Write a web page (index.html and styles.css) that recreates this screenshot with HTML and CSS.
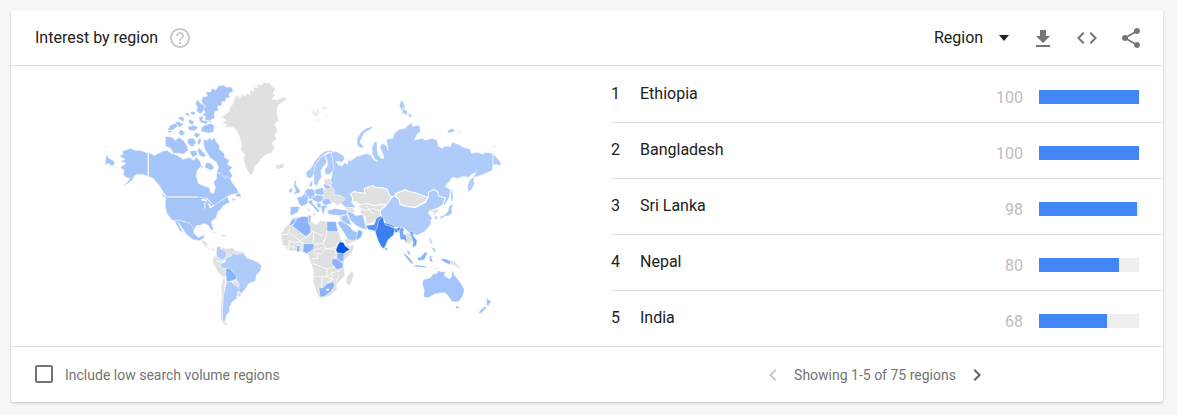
FILE: index.html
```html
<!DOCTYPE html>
<html lang="en">
<head>
<meta charset="utf-8">
<title>Interest by region</title>
<link rel="stylesheet" href="styles.css">
</head>
<body>
<main class="card">
  <header class="card-header">
    <h1 class="title">Interest by region</h1>
    <button class="icon-button help" type="button" aria-label="Help">
      <svg viewBox="0 0 24 24" width="24" height="24"><path fill="#cacaca" d="M11 18h2v-2h-2v2zm1-16C6.480 2 2 6.480 2 12s4.480 10 10 10 10-4.480 10-10S17.520 2 12 2zm0 18c-4.410 0-8-3.590-8-8s3.590-8 8-8 8 3.590 8 8-3.590 8-8 8zm0-14c-2.210 0-4 1.790-4 4h2c0-1.100.9-2 2-2s2 .9 2 2c0 2-3 1.750-3 5h2c0-2.250 3-2.500 3-5 0-2.210-1.790-4-4-4z"/></svg>
    </button>
    <div class="actions">
      <div class="resolution">
        <select class="resolution-select" aria-label="Resolution"><option>Region</option></select>
        <svg class="caret" viewBox="0 0 10 6" width="10" height="6"><path fill="#212121" d="M0 0h10L5 6z"/></svg>
      </div>
      <button class="icon-button" type="button" aria-label="Download"><svg viewBox="0 0 24 24" width="24" height="24"><path fill="#757575" d="M19 10h-4V4H9v6H5l7 7 7-7zM5 19v2h14v-2H5z"/></svg></button>
      <button class="icon-button" type="button" aria-label="Embed"><svg viewBox="0 0 24 24" width="24" height="24"><path fill="#757575" d="M9.400 16.600L4.800 12l4.600-4.600L8 6l-6 6 6 6 1.400-1.400zm5.200 0l4.600-4.600-4.600-4.600L16 6l6 6-6 6-1.400-1.400z"/></svg></button>
      <button class="icon-button" type="button" aria-label="Share"><svg viewBox="0 0 24 24" width="24" height="24"><path fill="#757575" d="M18 16.080c-.76 0-1.440.3-1.960.77L8.910 12.700c.05-.23.09-.46.09-.7s-.04-.47-.09-.7l7.050-4.110c.54.5 1.250.81 2.040.81 1.660 0 3-1.340 3-3s-1.340-3-3-3-3 1.340-3 3c0 .24.04.47.09.7L8.040 9.810C7.500 9.310 6.790 9 6 9c-1.660 0-3 1.340-3 3s1.340 3 3 3c.79 0 1.500-.31 2.040-.81l7.120 4.160c-.05.21-.08.43-.08.65 0 1.610 1.310 2.920 2.920 2.920s2.920-1.310 2.920-2.920-1.310-2.920-2.920-2.920z"/></svg></button>
    </div>
  </header>
  <div class="card-body">
    <div class="map-pane">
      <svg class="map" viewBox="100 77 410 260" role="img" aria-label="World map of interest by region">
        <!-- Russia lies under its neighbours -->
        <path class="land lighter" d="M331 153L336 152L343 156L345 159L342 163L336 162L338 165L342 167L345 163L347 165L348 162L351 158L350 162L357 157L367 154L371 156L374 161L378 162L375 160L372 155L372 148L374 143L377 142L377 149L378 155L381 159L384 159L382 153L380 148L382 144L386 146L388 151L387 145L386 140L393 139L394 134L399 130L405 129L408 126L412 123L412 127L417 126L420 127L420 133L417 135L414 141L422 139L425 141L432 139L437 141L438 147L442 149L444 147L450 147L452 143L458 145L463 148L470 150L471 154L477 153L483 155L484 153L492 154L496 158L500 163L500 167L496 165L493 166L492 171L488 173L483 175L477 177L473 178L474 184L472 189L468 193L467 187L469 181L473 177L476 173L471 175L468 178L463 177L457 179L452 178L449 182L445 187L450 190L449 198L445 205L441 207L436 210L350 208L347 209L341 204L339 200L334 197L330 191L330 183L332 176L333 167z"/>
        <g class="land">
          <!-- Greenland, Iceland, Svalbard -->
          <path d="M222 118L226 115L230 112L230 109L234 104L235 99L238 96L240 99L243 95L245 97L248 94L251 96L250 91L254 92L254 88L258 89L257 85L262 86L263 83L270 84L273 88L276 90L273 94L276 96L272 100L278 101L283 98L287 99L285 102L281 104L278 107L277 114L279 121L275 125L278 131L275 136L277 140L272 144L275 148L272 154L267 155L261 160L259 164L255 167L254 173L251 176L248 172L246 167L244 161L245 155L241 151L242 145L240 138L237 131L233 128L225 128L227 125L222 124L227 121z"/>
          <path d="M275 164L278 166L283 164L285 167L282 169L277 170L276 167z"/>
          <path opacity=".6" d="M311 112L314 110L315 113L318 109L320 113L317 118L314 117zM321 108L327 107L328 110L323 111zM316 121L320 119L318 123zM325 115L329 114L327 117z"/>
          <!-- Central America and Caribbean -->
          <path d="M200 240L205 241L208 244L208 247L211 249L217 249L214 251L209 249L205 246L203 243zM209 232L214 232L220 235L215 234zM221 235L226 235L227 237L222 237z"/>
          <!-- South America -->
          <path d="M221 247L227 249L233 248L236 251L244 252L242 257L234 259L229 261L224 260zM214 256L219 257L223 261L222 266L226 269L227 274L225 279L219 273L213 262zM224 277L226 280L225 290L224 301L224 319L227 323L229 326L225 325L221 320L221 309L222 298L222 286zM233 280L238 281L241 285L239 290L235 287zM238 291L242 294L241 297L237 296z"/>
          <!-- Eastern Europe -->
          <path d="M324 180L330 179L332 184L330 187L325 186zM325 187L331 186L335 191L334 195L341 196L345 199L341 204L337 206L334 203L330 205L328 200L323 199L324 192zM345 208L352 208L356 212L350 214zM339 215L347 213L346 220L340 223z"/>
          <!-- Central Asia -->
          <path class="tight" d="M350 195L354 192L360 193L365 194L364 189L373 186L375 188L382 188L387 190L389 195L392 198L390 201L387 206L381 205L374 207L367 206L361 207L359 204L357 207L352 203L353 198z"/>
          <path class="tight" d="M357 206L366 204L374 206L385 205L386 209L382 213L378 219L371 224L366 225L365 217L360 214z"/>
          <path class="tight" d="M395 194L401 192L405 190L409 192L414 193L420 195L425 197L428 198L425 202L420 205L415 208L406 207L399 204z"/>
          <path d="M431 211L437 208L438 212L434 215zM344 239L351 240L358 237L357 241L346 245zM404 235L409 233L413 240L409 245L405 241zM450 260L455 262L459 267L461 270L456 267L450 264z"/>
          <!-- Africa -->
          <path d="M290 224L296 217L308 217L311 222L317 225L320 221L327 222L336 223L339 232L341 240L344 244L350 246L355 245L352 253L344 261L344 267L345 276L337 284L337 290L330 296L320 299L317 293L313 281L314 272L311 263L308 253L302 252L289 251L283 245L281 235L285 228z"/>
          <path d="M352 271L354 275L351 284L348 286L346 283L347 277z"/>
        </g>
        <path class="borders" d="M281 235h7l2-6M290 233l10 8 9-5 4-4 9 4M289 241l6 2 5-1 5 2M290 241l-1 5 5 1v5M283 246l6 1 0 5M302 244v8M314 234l-1 10M327 232l-1 5-3 7M313 245l10-1 3 5 9-1 3-5M314 251l8-3M326 237l-3 7M315 254l7 0 3-5 10 1 2 5-4 6 1 7-8 1-9-4-4-1M312 259l6 0 0-4M327 269l0 8-14 0M322 277l0 11M327 277l5-4 0 7-5 3M332 273l8-2M327 277l7 3M336 282l3-7M357 207l8 4 8-2 9 3M367 206l3 6 5 3M216 261l5 1"/>
        <g class="land low">
          <!-- United States -->
          <path d="M166 196L200 196L207 199L211 203L220 202L228 197L230 203L224 206L222 209L218 213L217 218L212 222L214 230L212 231L209 226L205 224L200 226L197 226L195 231L190 226L185 222L173 221L168 215L166 208z"/>
          <!-- Alaska and the Chukchi tip -->
          <path d="M120 157L124 155L123 152L131 149L136 151L141 151L149 154L149 177L143 175L138 175L135 177L133 181L129 184L123 187L129 182L131 179L127 178L124 175L125 171L121 168L127 164L121 162L126 160z"/>
          <path d="M107 155L110 159L114 161L116 164L113 167L109 164L106 166zM106 147h2l-1 2zM116 168h2l-1 2zM132 236h1v1z"/>
          <!-- Canada mainland -->
          <path d="M149 153L155 156L163 152L168 151L172 154L178 156L184 160L190 158L194 161L197 158L201 162L202 167L198 171L197 176L199 184L206 187L210 188L211 193L214 194L216 188L214 183L217 179L217 173L222 174L225 177L229 174L232 182L238 190L239 194L232 195L228 197L223 200L215 206L211 203L208 199L200 197.500L168 197.500L164 193L160 186L154 179L149 177z"/>
          <path d="M235 196L240 193L242 198L238 197zM232 199h4l-2 3zM162 193l3 2 2 5-3-3z"/>
          <!-- Arctic islands -->
          <path d="M203 98L208 97L206 93L211 93L213 89L216 91L219 87L224 86L227 88L232 88L234 92L229 95L231 98L227 99L225 103L223 102L222 107L218 107L219 111L215 113L215 119L211 121L213 124L208 121L205 122L206 117L202 116L206 113L202 109L206 107L202 103z"/>
          <path d="M198 100l3 4 4 2-1 6-3 3-4-3 1-4-2-3zM192 112l4 1-1 3-4-1zM199 118l5-1-1 4 6 1-2 3-6-2zM190 120l5 2-2 4-4-3zM181 117l4 2-1 4-5-4zM186 113l3 1 2 3-5-1zM178 122l7 3-5 3-4-4zM171 126l5-2 3 3-6 4-5 0zM188 128l6-2 5 2-4 4-5-1zM203 127l8-3 4 2-1 7-5 1-8-2zM181 130l5 3-3 4-4-3zM197 133l4 2-3 4-4-3zM169 131l5 1-5 2z"/>
          <path d="M166 137L173 138L176 141L180 138L184 141L188 147L189 151L184 155L179 154L174 154L171 149L166 147zM189 139h5l3 4-4 5-5-4zM199 139l3 1-1 5h-3zM190 152l7-1 1 5-5 2zM200 148l3 4 4 4-3 2-4-2-2-4z"/>
          <path d="M204 140L208 141L210 138L212 141L215 138L217 143L220 146L220 150L225 154L225 158L230 161L228 165L233 168L230 171L233 176L231 180L227 176L226 179L221 174L217 173L219 168L217 163L211 159L209 156L206 151L204 145z"/>
          <path d="M207 163l5 1 3 5-4 2-6-3zM202 166l2 2-2 1z"/>
          <!-- Mexico -->
          <path d="M175 221L181 221L187 223L190 223L194 228L195 234L199 238L203 236L206 235L204 239L200 241L194 240L188 236L183 229L179 223L182 230L184 234L180 231z"/>
        </g>
        <g class="land lighter">
          <!-- Brazil, Colombia, Argentina -->
          <path d="M226 259L232 256L233 253L237 255L244 253L247 258L253 260L259 263L262 266L261 271L257 275L256 281L249 284L246 289L242 294L237 290L240 285L236 279L233 273L228 269L222 268L221 264L226 262z"/>
          <path d="M217 248L220 246L221 249L226 251L227 256L224 261L217 257z"/>
          <path d="M227 282L231 281L235 285L240 288L238 293L237 299L233 302L230 307L230 312L227 315L226 321L223 321L223 311L224 295zM225 323l4 3-3-1z"/>
          <!-- Russian islands -->
          <path d="M373 127L371 130L365 133L362 138L360 143L364 148L360 149L357 145L357 139L361 133L366 129zM401 101L404 104L405 110L401 111L399 106zM402 108L407 112L407 116L402 114zM408 113L412 117L409 119zM447 131L452 129L455 132L448 134zM457 132l4 2-3 0zM492 147l3 0-1 2zM452 189L453 201L451 202L450 193z"/>
          <!-- China -->
          <path class="tight" d="M380 211L386 206L390 200L394 196L399 200L400 205L406 207L415 208L425 203L428 198L428 193L433 190L437 192L439 197L445 198L443 205L437 209L431 211L428 213L432 218L430 226L425 232L417 236L408 233L403 228L394 228L385 223L381 216z"/>
          <!-- Scandinavia -->
          <path d="M306 173L311 169L315 162L320 156L325 152L332 151L333 153L328 153L321 158L317 165L315 174L311 179L307 178z"/>
          <path d="M314 175L315 166L321 158L325 156L327 163L323 168L321 172L322 177L319 182L317 187L314 184z"/>
          <path d="M325 156L331 153L333 162L334 170L330 175L325 175L325 170L328 166L327 160z"/>
        </g>
        <g class="land mid">
          <!-- Western and southern Europe -->
          <path d="M295 181L297 181L296 185L299 189L301 193L294 195L296 191L294 186zM290 189h3l-1 4h-3zM297 198L302 197L305 193L309 197L308 204L302 207L299 204zM291 207L300 207L298 213L292 216L290 214zM305 192L308 189L315 190L315 197L311 200L306 197zM315 190L323 188L325 195L319 196L315 194zM311 182h2l-1 5h-3zM307 202L313 200L313 204L320 211L318 213L311 205zM312 197L319 195L324 197L324 201L318 203L312 200zM323 199L329 199L332 204L325 206L322 203zM316 203L321 204L322 209L318 208zM321 206L328 206L325 210L324 216L321 209zM324 184L331 187L328 190L324 188zM308 208l2 2-1 3zM312 214h4l-1 2z"/>
          <path d="M327 211L335 209L342 210L348 211L347 215L339 216L329 215z"/>
          <!-- Middle East -->
          <path d="M347 212L352 213L356 216L363 215L365 224L367 230L362 229L356 226L350 220zM341 217L347 215L352 226L346 224L342 222zM337 223L342 221L349 226L352 230L355 232L361 233L361 237L354 241L348 240L342 230z"/>
          <path d="M449 206l4-1-2 5 1 3-3 3-5 1-4 3 0-3 5-2 3-4zM434 216l3 1v3h-2z"/>
          <!-- Australia and New Zealand -->
          <path class="australia" d="M422 284L423 280L430 278L433 274L436 274L438 271L441 272L445 272L444 276L449 279L451 277L452 270L454 275L457 279L461 284L464 290L462 297L458 302L452 302L449 298L447 295L444 293L435 294L428 298L423 297L424 291zM455 306h4l-1 3h-2zM486 297l2 3 3 1-3 5-2-1zM485 306l1 2-5 5-3 1 1-3z"/>
          <path d="M430 237l1 4 2 3-3-1-1-3zM431 247l4 2v4l-2-2z"/>
        </g>
        <g class="land strong">
          <path d="M289 227L292 220L296 218L296 223zM295 220L302 217L309 217L309 223L311 228L311 233L306 237L293 227zM308 216h3v6l-2 2zM327 222L336 222L338 232L327 232zM304 244h10l0 5-4 3-3 2-4-2zM297 246h3v6h-3zM337 253h7v7l-3 3-4-4zM332 259L338 259L343 263L343 268L337 270L332 264zM319 288L323 288L327 284L333 282L335 285L332 291L324 297L320 297zM226 269L230 268L233 272L237 276L237 279L233 281L227 282zM358 230l5 2-2 6-5 3z"/>
          <path d="M402 252l3 2 6 6 3 5-4-2-6-8zM414 265l8 1 5 1-1 1-11-1zM417 257L420 258L425 252L427 254L424 260L418 261zM429 257l4-1-2 2 2 4h-3zM440 259h4l6 2v4l-5-2-3-2zM407 250l3 3v3l-3-3zM434 268h4l-3 1z"/>
        </g>
        <g class="land top">
          <path opacity=".8" d="M409 232h4v4l4 5-1 5-4 2 1-5-2-6zM399 230l3-3 2 3-1 4 3 2 1 8-3-4-4 0z"/>
          <path d="M366 226L374 225L376 219L381 216L383 220L378 228L377 232L368 230z"/>
          <path class="india" d="M379 220L383 217L384 223L391 227L396 229L401 227L398 233L395 231L393 236L388 240L386 245L384 249L381 247L378 241L375 232L377 228z"/>
          <path d="M385 223l9 3v2l-9-3zM394 229h3l1 4h-3zM385 247l2 2v2l-2-1z"/>
        </g>
        <path class="land ethiopia" d="M338 245L340 242L344 243L345 246L350 250L346 252L344 254L337 253L336 250z"/>
        <path class="borders" d="M492.500 154v18M149 153v24M168 197.500h30"/>
        <path class="lake" d="M353 202L357 202L358 205L361 210L360 214L356 213L355 208zM326 289h3v2h-2zM202 199l5 1 1 2-6-1zM205 203l1 0 0 6-1 0zM208 203l3 2-1 3zM210 207l6-2-5 4z"/>
      </svg>
    </div>
    <ol class="regions">
      <li class="region"><span class="rank">1</span><span class="name">Ethiopia</span><span class="value">100</span><span class="bar"><span class="fill" style="width:100%"></span></span></li>
      <li class="region"><span class="rank">2</span><span class="name">Bangladesh</span><span class="value">100</span><span class="bar"><span class="fill" style="width:100%"></span></span></li>
      <li class="region"><span class="rank">3</span><span class="name">Sri Lanka</span><span class="value">98</span><span class="bar"><span class="fill" style="width:98%"></span></span></li>
      <li class="region"><span class="rank">4</span><span class="name">Nepal</span><span class="value">80</span><span class="bar"><span class="fill" style="width:80%"></span></span></li>
      <li class="region"><span class="rank">5</span><span class="name">India</span><span class="value">68</span><span class="bar"><span class="fill" style="width:68%"></span></span></li>
    </ol>
  </div>
  <footer class="card-footer">
    <div class="low-volume">
      <input class="checkbox" type="checkbox" id="low-volume">
      <label for="low-volume">Include low search volume regions</label>
    </div>
    <nav class="pager" aria-label="Pages">
      <button class="icon-button" type="button" aria-label="Previous" disabled><svg viewBox="0 0 24 24" width="24" height="24"><path fill="#cacaca" d="M15.410 7.410L14 6l-6 6 6 6 1.410-1.410L10.830 12z"/></svg></button>
      <span class="pager-text">Showing 1-5 of 75 regions</span>
      <button class="icon-button" type="button" aria-label="Next"><svg viewBox="0 0 24 24" width="24" height="24"><path fill="#616161" d="M10 6L8.590 7.410 13.170 12l-4.580 4.590L10 18l6-6z"/></svg></button>
    </nav>
  </footer>
</main>
</body>
</html>
```

FILE: styles.css
```css
* { box-sizing: border-box; }

body {
  margin: 0;
  padding: 10px 14px 12px 11px;
  background: #f7f7f7;
  color: #212121;
  font: 16px/24px Roboto, "Liberation Sans", sans-serif;
}

.card {
  background: #fff;
  border-radius: 2px;
  box-shadow: 0 1px 3px rgba(0, 0, 0, 0.22);
}

.card-header {
  display: flex;
  align-items: center;
  height: 56px;
  padding: 0 20px 0 24px;
  border-bottom: 1px solid #e0e0e0;
}

.title { margin: 0; font-size: 16px; font-weight: 400; }

.icon-button {
  display: flex;
  padding: 0;
  border: 0;
  background: none;
}

.help { margin-left: 10px; }

.actions {
  display: flex;
  align-items: center;
  gap: 20px;
  margin-left: auto;
}

.resolution {
  display: flex;
  align-items: center;
  margin-right: 2px;
}

.resolution-select {
  appearance: none;
  width: 77px;
  margin-right: -12px;
  padding: 0;
  border: 0;
  background: none;
  color: inherit;
  font: inherit;
}

.caret { pointer-events: none; }

.card-body {
  display: grid;
  grid-template-columns: 600fr 552fr;
  padding-top: 1px;
}

.map-pane {
  display: flex;
  align-items: center;
  justify-content: center;
  padding-right: 12px;
}

.map { width: 70%; height: auto; }

.land { fill: #e0e0e0; stroke: #fff; stroke-width: 0.5; stroke-linejoin: round; }
.tight { stroke-width: 1; }
.low { fill: #a5c5f9; }
.lighter { fill: #aecbfa; }
.mid { fill: #a3c4fa; }
.strong { fill: #8ab3f8; }
.top { fill: #5592f3; }
.india { fill: #3c80f0; }
.ethiopia { fill: #0057e7; }
.borders { fill: none; stroke: #fff; stroke-width: 0.8; }
.lake { fill: #fff; }

.regions { margin: 0; padding: 0; list-style: none; }

.region {
  display: flex;
  align-items: center;
  height: 56px;
  padding: 4px 24px 0 0;
  border-bottom: 1px solid #e0e0e0;
}

.region:last-child { height: 55px; border-bottom: 0; }
.rank { width: 29px; padding-bottom: 6px; }
.name { flex: 1; padding-bottom: 6px; }
.value { margin-right: 16px; padding-top: 2px; color: #bdbdbd; }
.bar { width: 100px; height: 14px; background: #eee; }
.fill { display: block; height: 100%; background: #4285f4; }

.card-footer {
  display: grid;
  grid-template-columns: 600fr 552fr;
  align-items: center;
  height: 56px;
  border-top: 1px solid #e0e0e0;
  color: #757575;
  font-size: 14px;
}

.low-volume { display: flex; align-items: center; padding-left: 24px; }

.checkbox {
  appearance: none;
  width: 18px;
  height: 18px;
  margin: 0 12px 2px 0;
  border: 2px solid #757575;
  border-radius: 2px;
}

.pager {
  display: flex;
  align-items: center;
  justify-content: center;
  gap: 9px;
  padding-right: 24px;
}
```
